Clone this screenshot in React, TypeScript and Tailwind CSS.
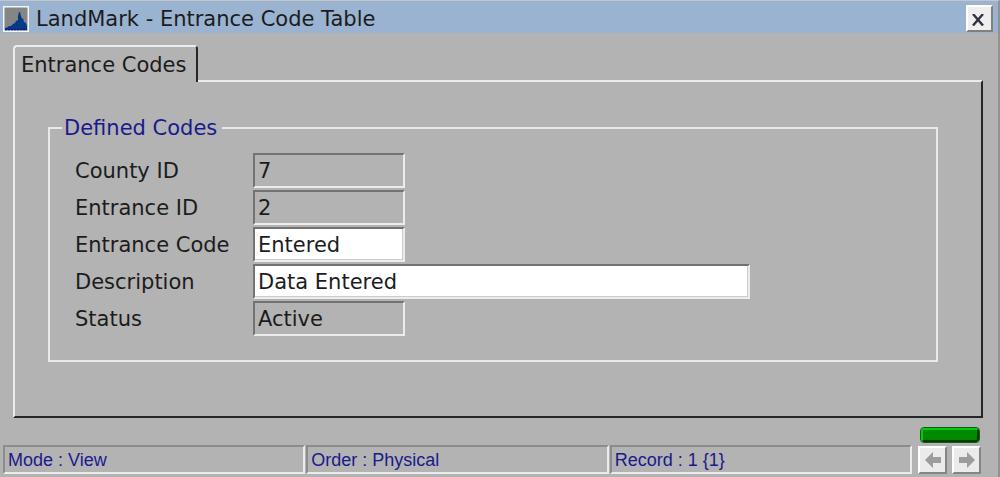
import React from 'react';
import { clsx } from 'clsx';

const fields = [
  { id: 'county-id', label: 'County ID', value: '7', readOnly: true },
  { id: 'entrance-id', label: 'Entrance ID', value: '2', readOnly: true },
  { id: 'entrance-code', label: 'Entrance Code', value: 'Entered' },
  { id: 'description', label: 'Description', value: 'Data Entered', wide: true },
  { id: 'status', label: 'Status', value: 'Active', readOnly: true },
];

const statusItems = ['Mode : View', 'Order : Physical', 'Record : 1 {1}'];

const Logo = () => (
  <svg className="w-[26px] h-[26px] shrink-0" viewBox="0 0 26 26" aria-hidden="true">
    <rect width="26" height="26" fill="#f2f4f6" />
    <rect x="1.5" y="1.5" width="23" height="23" fill="#858585" />
    <path
      d="M2 24V22L5 21L6 20H8L10 18L12 17L13 15L15 14V10L16 6H17L18 10L19 13L20 12L21 16L23 17L24 20V24Z"
      fill="#003c85"
    />
    <path d="M2 23.5H24" stroke="#101098" strokeWidth="1.6" strokeDasharray="2 1" />
  </svg>
);

const ArrowButton = ({ label, flip }: { label: string; flip?: boolean }) => (
  <button
    type="button"
    aria-label={label}
    className="w-[29px] h-7 flex items-center justify-center bg-[#ebebeb] border-2 border-t-white border-l-white border-r-[#858585] border-b-[#858585]"
  >
    <svg className={clsx('w-4 h-4', flip && 'rotate-180')} viewBox="0 0 16 16" aria-hidden="true">
      <path d="M0 8L8 0V5H16V11H8V16Z" fill="#9c9c9c" />
    </svg>
  </button>
);

const App = () => {
  return (
    <main className="min-h-screen flex flex-col bg-[#b3b3b3] border-t border-t-[#c6c6c6] border-r-2 border-r-[#929292] font-['DejaVu_Sans',Verdana,sans-serif] text-[21px] leading-6 text-[#1c1c1c]">
      <header className="h-8 pt-[3px] pl-[3px] pr-[5px] flex items-center gap-[7px] bg-[#9ab3d1]">
        <Logo />
        <h1 className="flex-1">LandMark - Entrance Code Table</h1>
        <button
          type="button"
          aria-label="Close"
          className="w-[27px] h-[27px] flex items-center justify-center bg-[#efefef] border-2 border-t-white border-l-white border-r-[#808080] border-b-[#808080]"
        >
          <svg className="w-3 h-3 mr-1 mt-[3px]" viewBox="0 0 12 12" aria-hidden="true">
            <path d="M1 0L11 11.5M11 0L1 11.5" fill="none" stroke="#33333f" strokeWidth="2.4" />
          </svg>
        </button>
      </header>

      <div className="flex-1 flex flex-col pt-3 pl-[13px] pr-[15px]">
        <div role="tablist" className="flex">
          <button
            type="button"
            role="tab"
            id="tab-codes"
            aria-selected="true"
            aria-controls="panel-codes"
            className="relative h-[37px] -mb-[2px] pl-[6px] pr-[10px] bg-[#b3b3b3] border-2 border-b-0 border-t-[#ececec] border-l-[#ececec] border-r-[#262626] rounded-t-[4px]"
          >
            Entrance Codes
          </button>
        </div>

        <div
          role="tabpanel"
          id="panel-codes"
          aria-labelledby="tab-codes"
          className="flex-1 border-2 border-t-[#ececec] border-l-[#ececec] border-r-[#262626] border-b-[#262626] pt-[34px] pl-[33px] pr-[43px]"
        >
          <fieldset className="border-2 border-[#e9e9e9] pl-[25px] pb-6">
            <legend className="-ml-[13px] pl-[2px] pr-[5px] bg-[#b3b3b3] text-[#1a1a8c]">Defined Codes</legend>
            <div className="flex flex-col gap-[2px] pt-[13px]">
              {fields.map((field) => (
                <div key={field.id} className="flex items-center">
                  <label htmlFor={field.id} className="w-[178px] shrink-0">
                    {field.label}
                  </label>
                  <input
                    id={field.id}
                    type="text"
                    defaultValue={field.value}
                    readOnly={field.readOnly}
                    className={clsx(
                      'h-[35px] px-[3px] border-2 border-t-[#737373] border-l-[#737373] border-r-[#ececec] border-b-[#ececec] outline-none',
                      field.wide ? 'w-[497px]' : 'w-[152px]',
                      field.readOnly ? 'bg-[#b3b3b3]' : 'bg-white shadow-[inset_-1px_-1px_0_#cccccc]'
                    )}
                  />
                </div>
              ))}
            </div>
          </fieldset>
        </div>
      </div>

      <footer className="flex items-end gap-[6px] pt-[10px] pl-[3px] pr-[17px] pb-[3px]">
        <div className="flex-1 grid grid-cols-3 gap-px font-['Liberation_Sans',Arial,sans-serif] text-[18px] text-[#1a1a8c]">
          {statusItems.map((item) => (
            <div
              key={item}
              className="h-[29px] px-[3px] flex items-center border-2 border-t-[#8c8c8c] border-l-[#8c8c8c] border-r-[#ececec] border-b-[#ececec]"
            >
              {item}
            </div>
          ))}
        </div>
        <div className="flex flex-col items-center gap-1">
          <div className="w-[58px] h-[14px] rounded-[3px] bg-[#008800] border-2 border-t-[#00cc10] border-l-[#00cc10] border-r-[#003c00] border-b-[#003c00] outline outline-[#145a14]" />
          <div className="flex gap-[5px]">
            <ArrowButton label="Previous record" />
            <ArrowButton label="Next record" flip />
          </div>
        </div>
      </footer>
    </main>
  );
};

export default App;
